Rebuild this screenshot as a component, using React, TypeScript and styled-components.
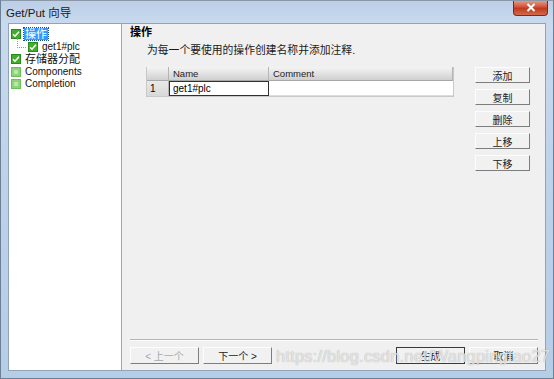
import React from "react";
import styled, { createGlobalStyle } from "styled-components";

const GlobalStyle = createGlobalStyle`
  html, body {
    margin: 0;
    padding: 0;
    background: #ffffff;
  }
  body {
    font-family: "Liberation Sans", "Noto Sans CJK SC", sans-serif;
    font-size: 11px;
    color: #000;
  }
`;

const FONT = `"Liberation Sans", "Noto Sans CJK SC", sans-serif`;

const Window = styled.div`
  position: relative;
  width: 554px;
  height: 379px;
  box-sizing: border-box;
  display: flex;
  flex-direction: column;
  padding: 0 7px 7px 7px;
  border: 1px solid #6d7f95;
  border-top-color: #8a98a8;
  background: linear-gradient(
    to bottom,
    #bccfe6 0%,
    #c9daee 6%,
    #bfd3ea 40%,
    #b6cde6 100%
  );
  overflow: hidden;
`;

const TitleBar = styled.div`
  height: 22px;
  display: flex;
  align-items: center;
  justify-content: space-between;
  margin-right: -2px;
`;

const Title = styled.span`
  font-family: ${FONT};
  font-size: 11.5px;
  color: #1a1a1a;
  margin-left: -2px;
  margin-top: -1px;
`;

const CloseButton = styled.div`
  align-self: flex-start;
  width: 35px;
  height: 16px;
  margin-top: -1px;
  box-sizing: border-box;
  border: 1px solid #7a2a1c;
  border-top: none;
  border-radius: 0 0 4px 4px;
  background: linear-gradient(to bottom, #e8a593 0%, #d2553a 45%, #c0391f 55%, #d36a4c 100%);
  display: flex;
  align-items: center;
  justify-content: center;
`;

const Client = styled.div`
  flex: 1;
  display: flex;
  border: 1px solid #8fa3bb;
  background: #f0f0f0;
  min-height: 0;
`;

const TreePane = styled.div`
  width: 113px;
  background: #ffffff;
  border-right: 1px solid #a5a5a5;
  padding: 4px 0 0 2px;
  box-sizing: border-box;
  position: relative;
`;

const TreeRow = styled.div<{ $indent?: number }>`
  display: flex;
  align-items: center;
  height: 12.5px;
  padding-left: ${(p) => (p.$indent ?? 0) * 17}px;
  gap: 3px;
  font-family: ${FONT};
  font-size: 10.5px;
  color: #111;
  white-space: nowrap;
`;

const TreeLabel = styled.span<{ $selected?: boolean; $cjk?: boolean }>`
  padding: 0 1px;
  font-size: ${(p) => (p.$cjk ? "11px" : "10px")};
  line-height: 12px;
  ${(p) =>
    p.$selected
      ? `background: #3399ff; color: #ffffff; outline: 1px dotted #1b4f8a;`
      : ""}
`;

const TreeLine = styled.div`
  position: absolute;
  left: 8px;
  top: 14px;
  width: 8px;
  height: 9px;
  border-left: 1px dotted #9a9a9a;
  border-bottom: 1px dotted #9a9a9a;
`;

const Content = styled.div`
  flex: 1;
  display: flex;
  flex-direction: column;
  padding: 1px 7px 6px 8px;
  min-width: 0;
`;

const Heading = styled.div`
  font-family: ${FONT};
  font-weight: bold;
  font-size: 11px;
  line-height: 14px;
`;

const Description = styled.div`
  font-family: ${FONT};
  font-size: 10.8px;
  line-height: 14px;
  margin: 4px 0 0 17px;
  color: #1a1a1a;
`;

const Body = styled.div`
  display: flex;
  margin-top: 10px;
  padding-left: 16px;
  align-items: flex-start;
  flex: 1;
`;

const Grid = styled.div`
  width: 306px;
  display: grid;
  grid-template-columns: 22px 100px 1fr;
  border: 1px solid #c8c8c8;
  border-top: none;
  background: #f0f0f0;
`;

const HeaderCell = styled.div`
  height: 14px;
  box-sizing: border-box;
  background: linear-gradient(to bottom, #f4f4f4 0%, #e2e2e2 50%, #cfcfcf 100%);
  border-right: 1px solid #b5b5b5;
  border-bottom: 1px solid #a8a8a8;
  font-family: ${FONT};
  font-size: 9.5px;
  line-height: 13px;
  padding-left: 4px;
  color: #222;
`;

const RowHeader = styled.div`
  height: 15px;
  box-sizing: border-box;
  background: linear-gradient(to bottom, #e9e9e9, #d8d8d8);
  border-right: 1px solid #b5b5b5;
  font-family: ${FONT};
  font-size: 10px;
  line-height: 15px;
  padding-left: 3px;
`;

const Cell = styled.div<{ $active?: boolean }>`
  height: 15px;
  box-sizing: border-box;
  background: #ffffff;
  font-family: ${FONT};
  font-size: 10px;
  line-height: 13px;
  padding-left: 3px;
  border: ${(p) => (p.$active ? "1px solid #303030" : "none")};
  border-bottom: 1px solid ${(p) => (p.$active ? "#303030" : "#dcdcdc")};
`;

const ButtonColumn = styled.div`
  display: flex;
  flex-direction: column;
  gap: 6px;
  margin-left: auto;
  margin-right: 8px;
`;

const Button = styled.button<{ $default?: boolean; $wide?: boolean }>`
  width: ${(p) => (p.$wide ? "69px" : "55px")};
  height: ${(p) => (p.$wide ? "17px" : "16px")};
  padding: 0;
  box-sizing: border-box;
  font-family: ${FONT};
  font-size: 10px;
  color: #222;
  background: #f1f1f1;
  border: 1px solid;
  border-color: #fdfdfd #7d7d7d #7d7d7d #fdfdfd;
  border-radius: 0;
  ${(p) => (p.$default ? "outline: 1px solid #3a3a3a; outline-offset: -1px;" : "")}
  &:disabled {
    color: #a8a8a8;
  }
`;

const Separator = styled.div`
  height: 0;
  border-top: 1px solid #b8b8b8;
  border-bottom: 1px solid #fbfbfb;
  margin: 0 0 6px 0;
`;

const Footer = styled.div`
  display: flex;
  align-items: center;
  gap: 4px;
`;

const Spacer = styled.div`
  flex: 1;
`;

const Watermark = styled.div`
  position: absolute;
  left: 275px;
  top: 346px;
  font-family: ${FONT};
  font-size: 16.5px;
  letter-spacing: 0.2px;
  color: rgba(238, 238, 238, 0.85);
  text-shadow: 0 0 1px rgba(110, 110, 110, 0.6);
  pointer-events: none;
  white-space: nowrap;
`;

const Check: React.FC<{ checked?: boolean }> = ({ checked = true }) => (
  <svg width="10" height="10" viewBox="0 0 10 10">
    <rect x="0.5" y="0.5" width="9" height="9" fill={checked ? "#3fae2a" : "#8fd27c"} stroke={checked ? "#2b8a1c" : "#6dbf58"} />
    {checked ? (
      <path d="M2 5.2 L4 7.2 L8 2.8" fill="none" stroke="#ffffff" strokeWidth="1.6" />
    ) : (
      <rect x="3" y="3" width="4" height="4" fill="#b9e7a8" />
    )}
  </svg>
);

const CloseIcon = () => (
  <svg width="10" height="9" viewBox="0 0 10 9">
    <path d="M1.5 1 L8.5 8 M8.5 1 L1.5 8" stroke="#ffffff" strokeWidth="2" />
  </svg>
);

export default function App() {
  return (
    <>
      <GlobalStyle />
      <Window>
        <TitleBar>
          <Title>Get/Put 向导</Title>
          <CloseButton>
            <CloseIcon />
          </CloseButton>
        </TitleBar>
        <Client>
          <TreePane>
            <TreeLine />
            <TreeRow>
              <Check />
              <TreeLabel $selected $cjk>
                操作
              </TreeLabel>
            </TreeRow>
            <TreeRow $indent={1}>
              <Check />
              <TreeLabel>get1#plc</TreeLabel>
            </TreeRow>
            <TreeRow>
              <Check />
              <TreeLabel $cjk>存储器分配</TreeLabel>
            </TreeRow>
            <TreeRow>
              <Check checked={false} />
              <TreeLabel>Components</TreeLabel>
            </TreeRow>
            <TreeRow>
              <Check checked={false} />
              <TreeLabel>Completion</TreeLabel>
            </TreeRow>
          </TreePane>
          <Content>
            <Heading>操作</Heading>
            <Description>为每一个要使用的操作创建名称并添加注释.</Description>
            <Body>
              <Grid>
                <HeaderCell />
                <HeaderCell>Name</HeaderCell>
                <HeaderCell>Comment</HeaderCell>
                <RowHeader>1</RowHeader>
                <Cell $active>get1#plc</Cell>
                <Cell />
              </Grid>
              <ButtonColumn>
                <Button>添加</Button>
                <Button>复制</Button>
                <Button>删除</Button>
                <Button>上移</Button>
                <Button>下移</Button>
              </ButtonColumn>
            </Body>
            <Separator />
            <Footer>
              <Button $wide disabled>
                &lt; 上一个
              </Button>
              <Button $wide>下一个 &gt;</Button>
              <Spacer />
              <Button $wide $default>
                生成
              </Button>
              <Button $wide>取消</Button>
            </Footer>
          </Content>
        </Client>
        <Watermark>https://blog.csdn.net/Wangpingtao27</Watermark>
      </Window>
    </>
  );
}
